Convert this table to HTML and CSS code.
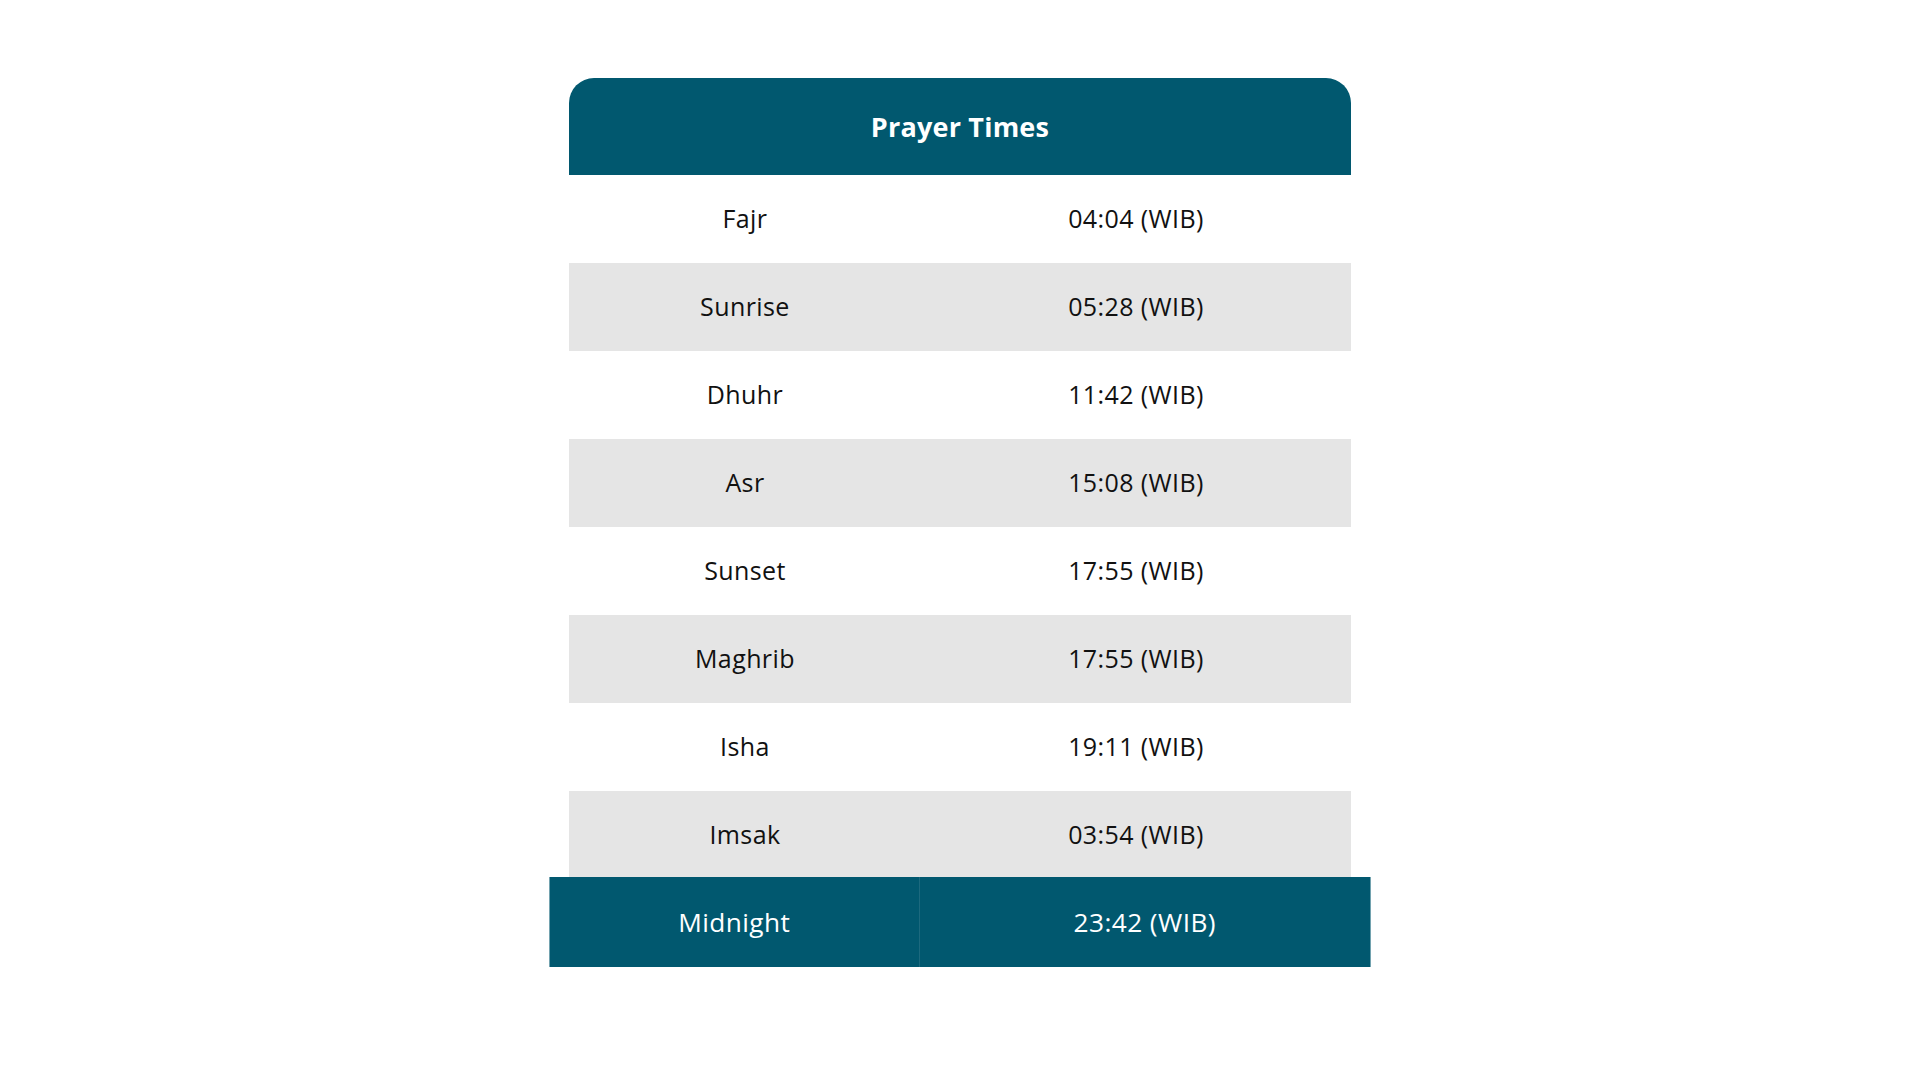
FILE: index.html
```html
<!DOCTYPE html>
<html lang="en">
<head>
<meta charset="utf-8">
<title>Prayer Times</title>
<link rel="stylesheet" href="styles.css">
</head>
<body>
<main class="page">
  <table class="prayer-table">
    <colgroup>
      <col class="col-name">
      <col class="col-time">
    </colgroup>
    <thead>
      <tr>
        <th colspan="2" class="title">Prayer Times</th>
      </tr>
    </thead>
    <tbody>
      <tr><td>Fajr</td><td>04:04 (WIB)</td></tr>
      <tr><td>Sunrise</td><td>05:28 (WIB)</td></tr>
      <tr><td>Dhuhr</td><td>11:42 (WIB)</td></tr>
      <tr><td>Asr</td><td>15:08 (WIB)</td></tr>
      <tr><td>Sunset</td><td>17:55 (WIB)</td></tr>
      <tr><td>Maghrib</td><td>17:55 (WIB)</td></tr>
      <tr><td>Isha</td><td>19:11 (WIB)</td></tr>
      <tr><td>Imsak</td><td>03:54 (WIB)</td></tr>
      <tr class="active"><td>Midnight</td><td>23:42 (WIB)</td></tr>
    </tbody>
  </table>
</main>
</body>
</html>
```

FILE: styles.css
```css
html, body {
  margin: 0;
  padding: 0;
  background: #ffffff;
}

body {
  font-family: "Open Sans", "Noto Sans", sans-serif;
  color: #111111;
}

.page {
  display: flex;
  justify-content: center;
  padding-top: 78px;
}

.prayer-table {
  width: 782px;
  border-collapse: collapse;
  border-spacing: 0;
  table-layout: fixed;
}

.col-name { width: 45%; }
.col-time { width: 55%; }

.title {
  background: #01586f;
  color: #ffffff;
  font-weight: 700;
  font-size: 27px;
  height: 97px;
  padding: 0;
  border-radius: 25px 25px 0 0;
  letter-spacing: 0.2px;
}

.prayer-table td {
  box-sizing: border-box;
  height: 88px;
  padding: 0 0 3px;
  text-align: center;
  vertical-align: middle;
  font-size: 25px;
  font-weight: 400;
  letter-spacing: 0.4px;
}

.prayer-table tbody tr:nth-child(even) {
  background: #e5e5e5;
}

.prayer-table tr.active {
  background: #01586f;
  color: #ffffff;
  transform: scale(1.05);
}

.prayer-table tr.active td {
  height: 88px;
}

.prayer-table tr.active td + td {
  box-shadow: inset 1px 0 0 rgba(255, 255, 255, 0.07);
}
```
